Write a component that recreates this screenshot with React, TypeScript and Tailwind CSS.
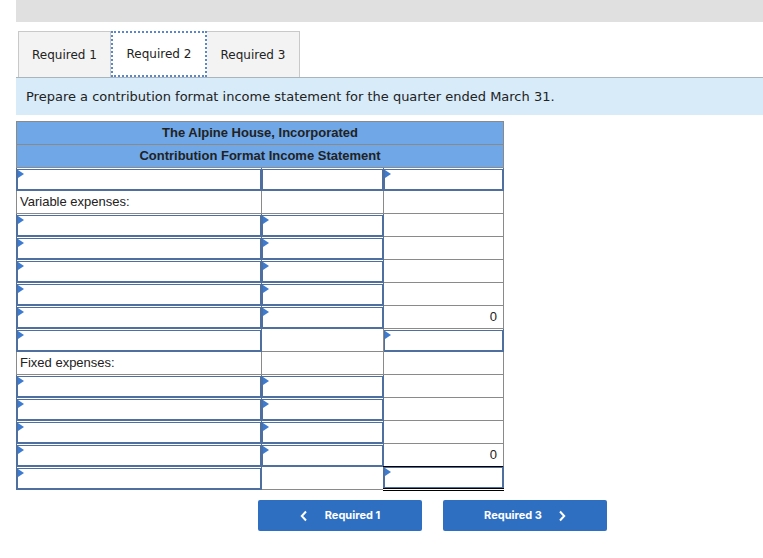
import React from 'react';

type Cell =
  | { kind: 'input'; arrow?: boolean; total?: 'single' | 'double' }
  | { kind: 'text'; text?: string; align?: 'left' | 'right'; topLine?: boolean };

const inp = (arrow = true, total?: 'single' | 'double'): Cell => ({ kind: 'input', arrow, total });
const txt = (text = '', align: 'left' | 'right' = 'left', topLine = false): Cell => ({ kind: 'text', text, align, topLine });

const rows: Cell[][] = [
  [inp(), inp(false), inp()],
  [txt('Variable expenses:'), txt(), txt()],
  [inp(), inp(), txt()],
  [inp(), inp(), txt()],
  [inp(), inp(), txt()],
  [inp(), inp(), txt()],
  [inp(), inp(), txt('0', 'right')],
  [inp(), txt('', 'left', true), inp(true, 'single')],
  [txt('Fixed expenses:'), txt(), txt()],
  [inp(), inp(), txt()],
  [inp(), inp(), txt()],
  [inp(), inp(), txt()],
  [inp(), inp(), txt('0', 'right')],
  [inp(), txt('', 'left', true), inp(true, 'double')],
];

const widths = ['w-[245px]', 'w-[122px]', 'w-[120px]'];

function Arrow() {
  return (
    <span className="absolute left-0 top-0 h-0 w-0 border-y-[4px] border-l-[6px] border-y-transparent border-l-[#3d7bd0]" />
  );
}

function BodyCell({ cell, col }: { cell: Cell; col: number }) {
  if (cell.kind === 'input') {
    const edge =
      cell.total === 'double'
        ? 'border-t-black border-b-[3px] border-b-black border-double'
        : cell.total === 'single'
        ? 'border-t-black'
        : '';
    return (
      <td className={`${widths[col]} h-[23px] border border-[#4f6f9f] p-0 ${edge}`}>
        <div className="relative h-[21px] border border-[#4f6f9f] bg-white">
          {cell.arrow && <Arrow />}
        </div>
      </td>
    );
  }
  return (
    <td
      className={`${widths[col]} h-[23px] border border-[#8a8a8a] px-[3px] text-[13px] text-[#222] ${
        cell.align === 'right' ? 'text-right pr-[6px]' : ''
      } ${cell.topLine ? 'border-t-black' : ''}`}
    >
      {cell.text}
    </td>
  );
}

function Chevron({ dir }: { dir: 'left' | 'right' }) {
  return (
    <svg width="8" height="12" viewBox="0 0 8 12" fill="none" stroke="white" strokeWidth="2">
      {dir === 'left' ? <path d="M6 1.5 1.8 6 6 10.5" /> : <path d="M2 1.5 6.2 6 2 10.5" />}
    </svg>
  );
}

export default function App() {
  return (
    <div className="min-h-[558px] w-[763px] bg-white pl-4 font-['Liberation_Sans',Arial,sans-serif]">
      <div className="h-[22px] bg-[#e0e0e0]" />

      <div className="mt-[9px] ml-[2px] flex h-[46px] font-['DejaVu_Sans',Verdana,sans-serif] text-[12px] text-[#222]">
        <div className="flex w-[93px] items-center justify-center border border-b-0 border-[#c9c9c9] bg-[#f3f3f3]">
          Required 1
        </div>
        <div className="flex w-[96px] items-center justify-center border-2 border-dotted border-[#5b86c8] bg-white">
          Required 2
        </div>
        <div className="flex w-[93px] items-center justify-center border border-b-0 border-l-0 border-[#c9c9c9] bg-[#f3f3f3]">
          Required 3
        </div>
      </div>

      <div className="flex h-[38px] items-center border-t border-[#a9b4bd] bg-[#d8ebf9] px-[10px] font-['DejaVu_Sans',Verdana,sans-serif] text-[13px] text-[#222]">
        Prepare a contribution format income statement for the quarter ended March 31.
      </div>

      <table className="mt-[6px] border-collapse">
        <thead>
          <tr>
            <th colSpan={3} className="h-[23px] border border-[#8a8a8a] bg-[#6fa7e7] text-[13px] font-bold text-[#222]">
              The Alpine House, Incorporated
            </th>
          </tr>
          <tr>
            <th colSpan={3} className="h-[23px] border border-[#8a8a8a] bg-[#6fa7e7] text-[13px] font-bold text-[#222]">
              Contribution Format Income Statement
            </th>
          </tr>
        </thead>
        <tbody>
          {rows.map((r, i) => (
            <tr key={i}>
              {r.map((c, j) => (
                <BodyCell key={j} cell={c} col={j} />
              ))}
            </tr>
          ))}
        </tbody>
      </table>

      <div className="mt-[9px] ml-[242px] flex gap-[21px] font-['Inter',sans-serif] text-[11px] font-bold text-white">
        <button className="flex h-[31px] w-[164px] items-center justify-center gap-[17px] rounded-[2px] bg-[#2f6fc2]">
          <Chevron dir="left" />
          <span>Required 1</span>
        </button>
        <button className="flex h-[31px] w-[164px] items-center justify-center gap-[16px] rounded-[2px] bg-[#2f6fc2]">
          <span>Required 3</span>
          <Chevron dir="right" />
        </button>
      </div>
    </div>
  );
}
